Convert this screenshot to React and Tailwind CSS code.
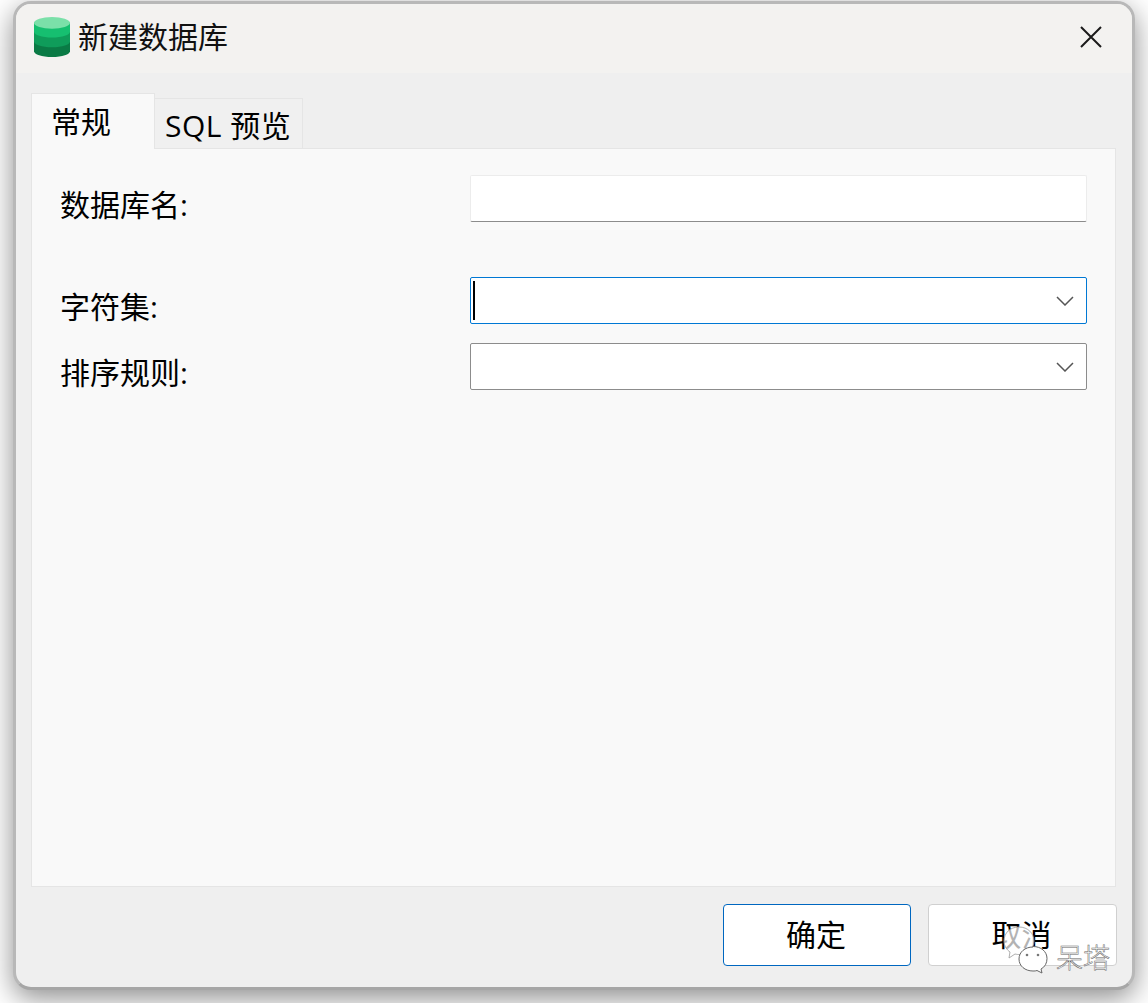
import React from 'react';

const FONT = "font-['Open_Sans','Noto_Sans_CJK_SC',sans-serif]";

const DbIcon = () => (
  <svg width="36" height="40" viewBox="0 0 37 41" className="-mt-[4px] shrink-0" preserveAspectRatio="none">
    <path d="M0 6v29c0 3 8 6 18.500 6S37 38 37 35V6z" fill="#0a7a45" />
    <path d="M0 6v19c0 3 8 6 18.500 6S37 28 37 25V6z" fill="#0f9c5a" />
    <path d="M0 6v9c0 3 8 6 18.500 6S37 18 37 15V6z" fill="#16bf70" />
    <ellipse cx="18.500" cy="6" rx="18.500" ry="6" fill="#7be0a9" />
  </svg>
);

const Chevron = () => (
  <svg width="18" height="10" viewBox="0 0 18 10" className="absolute right-[12px] top-[18px]">
    <path d="M1 1l8 8 8-8" fill="none" stroke="#555" strokeWidth="1.500" />
  </svg>
);

const Select = ({ focused }) => (
  <div className={`relative h-[47px] w-[617px] rounded-[2px] border bg-white ${focused ? 'border-[#0078d4]' : 'border-[#8c8c8c]'}`}>
    {focused && <div className="absolute left-[2px] top-[3px] h-[39px] w-[2px] bg-black" />}
    <Chevron />
  </div>
);

const Row = ({ label, className, children }) => (
  <div className={`flex h-[47px] items-start ${className}`}>
    <div className="h-[47px] w-[409px] pt-[12px] text-[30px] leading-[36px] text-black">{label}</div>
    {children}
  </div>
);

export default function App() {
  return (
    <div className={`h-[1003px] w-[1148px] overflow-hidden bg-white pl-[13px] pt-[1px] ${FONT}`}>
      <div className="relative flex h-[989px] w-[1122px] flex-col overflow-hidden rounded-[18px] border-[3px] border-[#b8b8b8] border-b-[#a6a6a6] bg-[#efefef] shadow-[0_8px_28px_rgba(0,0,0,0.45)]">
        {/* barra de titulo */}
        <div className="flex h-[69px] shrink-0 items-center bg-[#f3f2f0] pl-[18px] pr-[30px]">
          <DbIcon />
          <div className="-mt-[4px] ml-[8px] text-[30px] leading-[38px] text-[#111]">新建数据库</div>
          <svg width="22" height="22" viewBox="0 0 22 22" className="-mt-[4px] ml-auto">
            <path d="M1 1l20 20M21 1L1 21" fill="none" stroke="#1a1a1a" strokeWidth="2" />
          </svg>
        </div>

        {/* pestanas */}
        <div className="relative z-10 mt-[20px] flex h-[56px] shrink-0 items-end pl-[15px]">
          <div className="h-[56px] w-[124px] border border-b-0 border-[#e5e5e5] bg-[#f9f9f9] pl-[19px] pt-[9px] text-[30px] leading-[38px] text-black">常规</div>
          <div className="h-[51px] w-[148px] border border-l-0 border-[#e5e5e5] bg-[#f0f0f0] pl-[10px] pt-[8px] text-[30px] leading-[38px] tracking-[0.5px] text-black">SQL 预览</div>
        </div>

        {/* formulario */}
        <div className="mx-[15px] -mt-px h-[739px] w-[1085px] border border-[#e5e5e5] bg-[#f9f9f9] pl-[28px] pt-[26px]">
          <Row label="数据库名:">
            <div className="ml-px h-[47px] w-[617px] rounded-[2px] border border-[#ececec] border-b-[#8c8c8c] bg-white" />
          </Row>
          <Row label="字符集:" className="mt-[55px]">
            <div className="ml-px"><Select focused /></div>
          </Row>
          <Row label="排序规则:" className="mt-[19px]">
            <div className="ml-px"><Select /></div>
          </Row>
        </div>

        {/* botones */}
        <div className="mt-[17px] flex justify-end gap-[17px] pr-[15px]">
          <button className="h-[62px] w-[188px] rounded-[4px] border border-[#0067c0] bg-white pb-[2px] pr-[2px] text-[30px] text-black">确定</button>
          <button className="h-[62px] w-[189px] rounded-[4px] border border-[#d0d0d0] bg-white pb-[2px] pr-[2px] text-[30px] text-black">取消</button>
        </div>

        {/* marca de agua */}
        <div className="absolute left-[987px] top-[922px] flex items-start">
          <svg width="46" height="48" viewBox="0 0 46 48" className="shrink-0">
            <path d="M16 1C7 1 1 7 1 15c0 5 3 9 6 11l-1 6 6-4c2 .5 3 .5 4 .5 9 0 15-6 15-13.500S25 1 16 1z" fill="#fff" fillOpacity=".7" stroke="#9a9a9a" strokeOpacity=".8" />
            <path d="M30 21c-8 0-14 5-14 12s6 12 14 12c1.500 0 3 0 4-.5l5 2.500-1-4c4-2 6-6 6-10.500 0-7-6-12-14-12z" fill="#fff" stroke="#666" />
            <circle cx="24" cy="29" r="1.300" fill="#777" />
            <circle cx="35" cy="29" r="1.300" fill="#777" />
          </svg>
          <div className="ml-[7px] mt-[15px] text-[27px] font-light leading-[34px] text-white [-webkit-text-stroke:0.5px_#666]">呆塔</div>
        </div>
      </div>
    </div>
  );
}
